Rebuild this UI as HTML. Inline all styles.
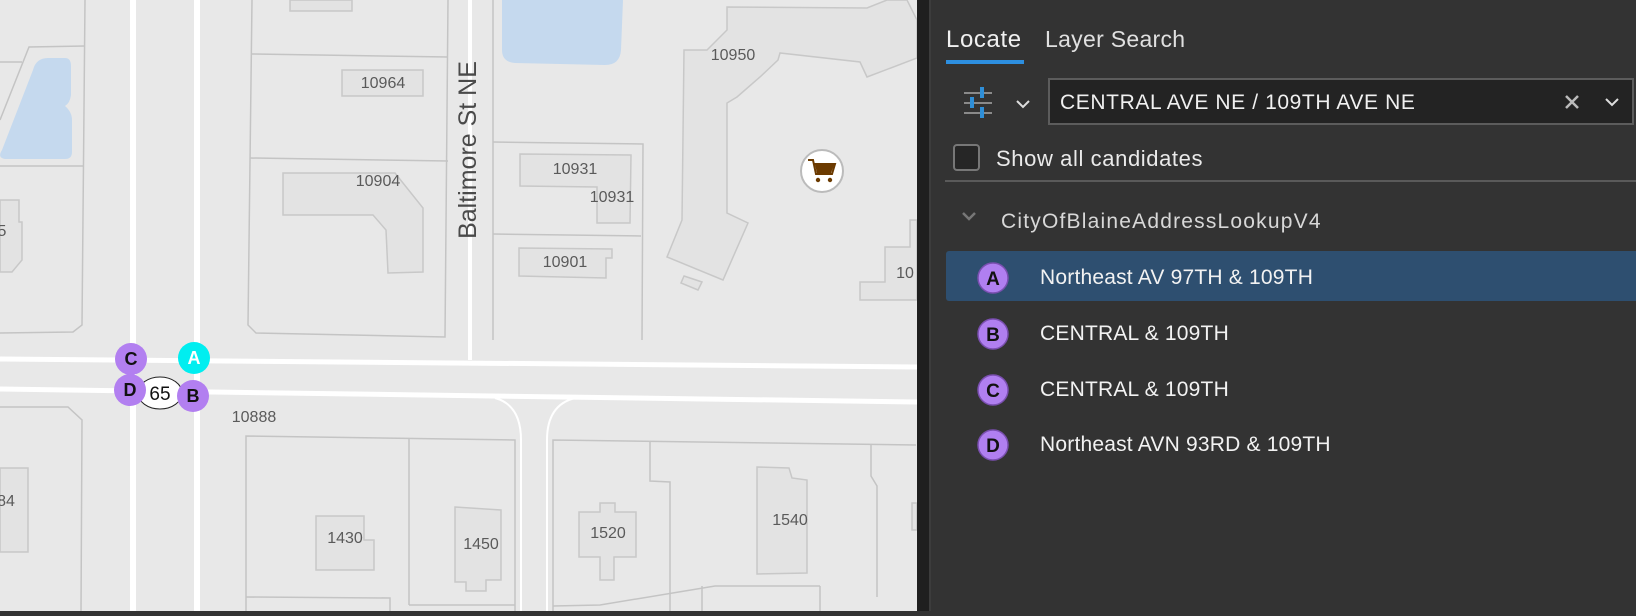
<!DOCTYPE html>
<html><head><meta charset="utf-8"><style>
html,body{margin:0;padding:0;width:1636px;height:611px;overflow:hidden;background:#333;font-family:"Liberation Sans",sans-serif}
#map{position:absolute;left:0;top:0;width:917px;height:611px;background:#e8e8e8}
#bar{position:absolute;left:917px;top:0;width:12px;height:611px;background:#1f1f1f}
#bar2{position:absolute;left:929px;top:0;width:2px;height:611px;background:#3c3c3c}
#panel{position:absolute;left:931px;top:0;right:0;height:611px;background:#333;color:#e6e6e6}
.t{position:absolute;white-space:nowrap}
.it{font-size:21px;letter-spacing:0.2px;color:#f2f2f2}
</style></head><body>
<div id="map">
<svg width="917" height="611" viewBox="0 0 917 611" xmlns="http://www.w3.org/2000/svg">
<rect width="917" height="611" fill="#e8e8e8"/>
<g fill="none" stroke="#c4c4c4" stroke-width="1.5">
<path d="M0,62 L22,62"/><path d="M0,120 L29,47 L85,46"/><path d="M0,166 L84,166"/>
<path d="M85,0 L82,325 L73,332 L0,333"/>
<path d="M0,407 L68,407 L82,420 L81,611"/>
<path d="M252,0 L248,325 L256,333 L445,337 L448,0"/>
<path d="M251,54 L448,57"/><path d="M250,158 L448,161"/>
<path d="M493,0 L493,340"/>
<path d="M493,142 L643,144 L642,340"/><path d="M493,234 L641,236"/>
<path d="M246,611 L246,436 L515,440 L515,611"/>
<path d="M553,611 L553,440 L916,445"/>
<path d="M409,438 L409,605"/><path d="M246,597 L390,598 L390,611"/><path d="M409,605 L515,605"/>
<path d="M650,441 L650,481 L670,482 L670,611"/>
<path d="M871,445 L871,476 L877,486 L877,597"/>
<path d="M553,606 L600,605 L715,586 L820,586"/><path d="M702,586 L702,611"/><path d="M820,586 L820,611"/>
</g>
<path d="M2,150 L33,70 Q36,58 48,58 L65,58 Q71,58 71,66 L71,95 Q70,103 65,106 Q72,112 72,120 L72,152 Q72,159 65,159 L5,159 Q-3,158 2,150 Z" fill="#c5d9ee"/>
<path d="M502,0 L623,0 L621,50 Q620,65 605,65 L515,63 Q502,62 502,50 Z" fill="#c5d9ee"/>
<g fill="#e3e3e3" stroke="#c8c8c8" stroke-width="1.5">
<path d="M0,200 L19,200 L19,222 L22,222 L22,260 L12,272 L0,272 Z"/>
<path d="M0,468 L28,468 L28,552 L0,552 Z"/>
<path d="M290,0 L352,0 L352,11 L290,11 Z"/>
<path d="M342,70 L423,70 L423,96 L342,96 Z"/>
<path d="M283,173 L395,173 L423,208 L423,272 L388,273 L386,230 L373,215 L283,215 Z"/>
<path d="M520,154 L631,155 L630,223 L597,223 L597,187 L520,186 Z"/>
<path d="M519,248 L612,249 L612,258 L606,258 L606,278 L519,276 Z"/>
<path d="M684,50 L707,50 L727,30 L727,7 L867,8 L887,0 L907,0 L917,20 L917,58 L867,77 L860,62 L780,53 L778,60 L760,77 L737,97 L727,103 L727,213 L748,223 L723,280 L667,257 L682,220 Z"/>
<path d="M684,276 L702,282 L698,290 L681,283 Z"/>
<path d="M860,300 L860,282 L885,282 L885,247 L910,247 L910,220 L917,220 L917,300 Z"/>
<path d="M316,516 L364,516 L364,540 L374,540 L374,570 L316,570 Z"/>
<path d="M455,507 L501,510 L501,580 L486,580 L486,591 L466,591 L466,582 L455,582 Z"/>
<path d="M600,512 L600,503 L615,503 L615,512 L636,512 L636,557 L614,557 L614,580 L600,580 L600,557 L579,557 L579,512 Z"/>
<path d="M757,467 L789,468 L792,478 L807,480 L807,573 L757,574 Z"/>
<path d="M912,503 L917,503 L917,530 L912,530 Z"/>
</g>
<g stroke="#fff" fill="none">
<path d="M133,0 L133,611" stroke-width="6"/>
<path d="M197,0 L197,611" stroke-width="6"/>
<path d="M470,0 L470,360" stroke-width="4"/>
<path d="M0,359 L917,367" stroke-width="5"/>
<path d="M0,389 L917,402" stroke-width="5"/>
<path d="M495,398 Q521,405 521,440 L521,611" stroke-width="2"/>
<path d="M575,398 Q547,405 547,440 L547,611" stroke-width="2"/>
</g>
<g fill="#5a5a5a" font-family="Liberation Sans, sans-serif" font-size="16" text-anchor="middle">
<text x="383" y="88">10964</text>
<text x="378" y="186">10904</text>
<text x="575" y="174">10931</text>
<text x="612" y="202">10931</text>
<text x="565" y="267">10901</text>
<text x="733" y="60">10950</text>
<text x="905" y="278">10</text>
<text x="254" y="422">10888</text>
<text x="345" y="543">1430</text>
<text x="481" y="549">1450</text>
<text x="608" y="538">1520</text>
<text x="790" y="525">1540</text>
<text x="2" y="236">5</text>
<text x="6" y="506">84</text>
<text transform="translate(476,150) rotate(-90)" font-size="25" fill="#4a4a4a">Baltimore St NE</text>
</g>
<circle cx="822" cy="171" r="21" fill="#fff" stroke="#bbb" stroke-width="2"/>
<path d="M808,160 L813,160 L816,174 L832,174 L835,164 L814,164" fill="none" stroke="#6b3a00" stroke-width="2"/>
<path d="M815,165 L834,165 L831,173 L817,173 Z" fill="#6b3a00"/>
<circle cx="818" cy="180" r="2.2" fill="#6b3a00"/><circle cx="830" cy="180" r="2.2" fill="#6b3a00"/>
<ellipse cx="160" cy="393" rx="22" ry="16" fill="#fff" stroke="#222" stroke-width="1"/>
<text x="160" y="400" font-size="19" text-anchor="middle" fill="#111" font-family="Liberation Sans, sans-serif">65</text>
<g font-family="Liberation Sans, sans-serif" font-weight="bold" font-size="18" text-anchor="middle">
<circle cx="131" cy="359" r="16" fill="#b27ff0"/><text x="131" y="365" fill="#111">C</text>
<circle cx="194" cy="358" r="16" fill="#00eef0"/><text x="194" y="364" fill="#fff">A</text>
<circle cx="130" cy="390" r="16" fill="#b27ff0"/><text x="130" y="396" fill="#111">D</text>
<circle cx="193" cy="396" r="16" fill="#b27ff0"/><text x="193" y="402" fill="#111">B</text>
</g>
</svg>
</div>
<div id="bar"></div><div id="bar2"></div>
<div id="panel">
<div class="t" style="left:15px;top:26px;font-size:24px;letter-spacing:0.6px;color:#f0f0f0">Locate</div>
<div style="position:absolute;left:15px;top:60px;width:78px;height:4px;background:#2d8fe0"></div>
<div class="t" style="left:114px;top:26px;font-size:23px;letter-spacing:0.3px;color:#e0e0e0">Layer Search</div>
<svg style="position:absolute;left:33px;top:86px" width="70" height="34">
<g stroke="#8a8a8a" stroke-width="2"><path d="M0,7 L28,7"/><path d="M0,17 L28,17"/><path d="M0,27 L28,27"/></g>
<g stroke="#2f8fd8" stroke-width="4"><path d="M18,1 L18,12"/><path d="M8,11 L8,22"/><path d="M18,21 L18,32"/></g>
<path d="M53,15 L59,21 L65,15" stroke="#ddd" stroke-width="2" fill="none"/>
</svg>
<div style="position:absolute;left:117px;top:78px;width:586px;height:47px;background:#232323;border:2px solid #5c5c5c;box-sizing:border-box"></div>
<div class="t" style="left:129px;top:91px;font-size:21px;letter-spacing:0.6px;color:#f0f0f0">CENTRAL AVE NE / 109TH AVE NE</div>
<svg style="position:absolute;left:632px;top:93px" width="70" height="20">
<path d="M3,3 L15,15 M15,3 L3,15" stroke="#bbb" stroke-width="2.5"/>
<path d="M43,6 L49,12 L55,6" stroke="#ddd" stroke-width="2" fill="none"/>
</svg>
<div style="position:absolute;left:22px;top:144px;width:27px;height:27px;border:2px solid #777;border-radius:4px;box-sizing:border-box;background:#262626"></div>
<div class="t" style="left:65px;top:146px;font-size:22px;letter-spacing:0.6px;color:#eaeaea">Show all candidates</div>
<div style="position:absolute;left:14px;top:180px;right:0;height:2px;background:#5a5a5a"></div>
<svg style="position:absolute;left:30px;top:211px" width="16" height="12"><path d="M2,2 L8,8 L14,2" stroke="#777" stroke-width="2.5" fill="none"/></svg>
<div class="t" style="left:70px;top:210px;font-size:21px;letter-spacing:1.2px;color:#d8d8d8">CityOfBlaineAddressLookupV4</div>
<div style="position:absolute;left:15px;top:251px;right:0;height:50px;background:#2e4f70;border-radius:3px 0 0 3px"></div>
<div class="t it" style="left:109px;top:266px">Northeast AV 97TH &amp; 109TH</div>
<div class="t it" style="left:109px;top:322px">CENTRAL &amp; 109TH</div>
<div class="t it" style="left:109px;top:378px">CENTRAL &amp; 109TH</div>
<div class="t it" style="left:109px;top:433px">Northeast AVN 93RD &amp; 109TH</div>
<svg style="position:absolute;left:44px;top:260px" width="36" height="205" font-family="Liberation Sans, sans-serif" font-weight="bold" font-size="19" text-anchor="middle">
<g fill="#b07ff0" stroke="#7a4fb0" stroke-width="1.5">
<circle cx="18" cy="18" r="15"/><circle cx="18" cy="74" r="15"/><circle cx="18" cy="130" r="15"/><circle cx="18" cy="185" r="15"/></g>
<text x="18" y="25" fill="#111">A</text><text x="18" y="81" fill="#111">B</text><text x="18" y="137" fill="#111">C</text><text x="18" y="192" fill="#111">D</text>
</svg>
</div>
</body></html>
